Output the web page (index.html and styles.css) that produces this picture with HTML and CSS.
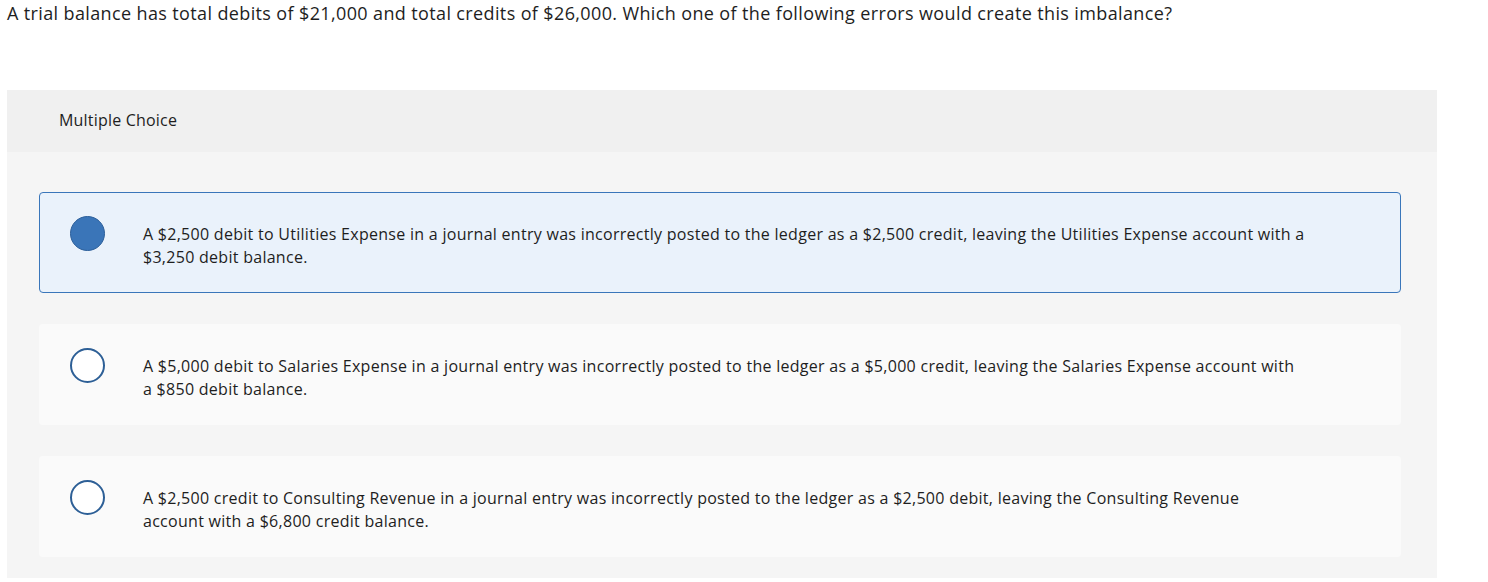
FILE: index.html
```html
<!DOCTYPE html>
<html>
<head>
<meta charset="utf-8">
<link rel="stylesheet" href="styles.css">
</head>
<body>
<div class="page">
  <p class="question">A trial balance has total debits of $21,000 and total credits of $26,000. Which one of the following errors would create this imbalance?</p>
  <div class="panel">
    <div class="panel-head">Multiple Choice</div>
    <div class="panel-body">
      <div class="option selected">
        <span class="radio"></span>
        <span class="text">A $2,500 debit to Utilities Expense in a journal entry was incorrectly posted to the ledger as a $2,500 credit, leaving the Utilities Expense account with a $3,250 debit balance.</span>
      </div>
      <div class="option">
        <span class="radio"></span>
        <span class="text">A $5,000 debit to Salaries Expense in a journal entry was incorrectly posted to the ledger as a $5,000 credit, leaving the Salaries Expense account with a $850 debit balance.</span>
      </div>
      <div class="option">
        <span class="radio"></span>
        <span class="text">A $2,500 credit to Consulting Revenue in a journal entry was incorrectly posted to the ledger as a $2,500 debit, leaving the Consulting Revenue<br>account with a $6,800 credit balance.</span>
      </div>
    </div>
  </div>
</div>
</body>
</html>
```
FILE: styles.css
```css
html, body {
  margin: 0;
  padding: 0;
  background: #ffffff;
}
body {
  font-family: "Open Sans", Lato, sans-serif;
  color: #1e1e1e;
  font-variant-ligatures: none;
}
.page {
  padding: 0 51px 0 7px;
}
.question {
  margin: 0;
  padding-top: 1px;
  font-size: 18px;
  letter-spacing: 0.37px;
  line-height: 24px;
  height: 89px;
}
.panel {
  background: #f5f5f5;
  width: 1430px;
}
.panel-head {
  background: #f0f0f0;
  height: 62px;
  box-sizing: border-box;
  padding: 20px 0 0 52px;
  font-size: 16px;
  letter-spacing: 0.2px;
  line-height: 20px;
}
.panel-body {
  padding: 40px 36px 21px 32px;
  display: flex;
  flex-direction: column;
  gap: 31px;
}
.option {
  display: flex;
  align-items: flex-start;
  background: #fafafa;
  border: 1px solid transparent;
  border-radius: 4px;
  height: 101px;
  box-sizing: border-box;
  padding: 30px 94px 0 30px;
  font-size: 16px;
  letter-spacing: 0.28px;
  line-height: 23px;
}
.option.selected {
  background: #eaf2fb;
  border-color: #3a76ba;
}
.radio {
  flex: none;
  width: 35px;
  height: 35px;
  box-sizing: border-box;
  border-radius: 50%;
  border: 2px solid #2d5f96;
  background: #ffffff;
  margin-top: -7px;
  margin-right: 38px;
}
.selected .radio {
  background: #3a75b8;
  border: 1px solid #2c5f9a;
}
.text {
  flex: 1;
}
```
